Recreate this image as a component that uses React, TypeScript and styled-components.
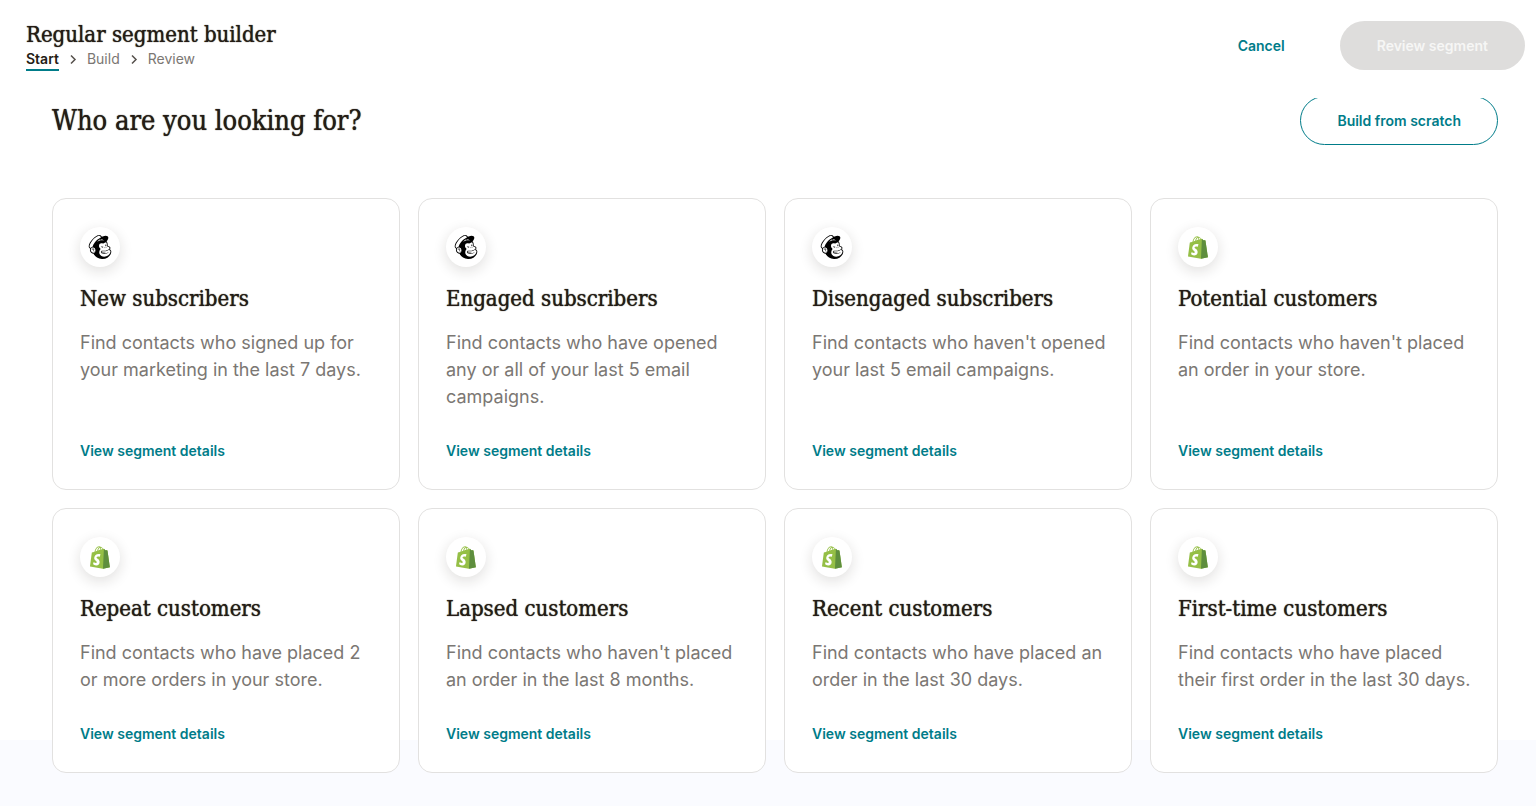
import React from "react";
import styled, { createGlobalStyle } from "styled-components";
import { SiMailchimp } from "react-icons/si";

const INK = "#241c15";
const MUTED = "#7b7773";
const TEAL = "#007c89";
const SERIF = '"DejaVu Serif Condensed", "DejaVu Serif", serif';

const GlobalStyle = createGlobalStyle`
  *, *::before, *::after { box-sizing: border-box; }
  body {
    margin: 0;
    background: #fafbff;
    color: ${INK};
    font-family: Inter, "Liberation Sans", sans-serif;
  }
  h1, h2, h3, p, ol { margin: 0; padding: 0; }
  h1, h2, h3 { text-shadow: 0 0 1px ${INK}; }
`;

const Page = styled.div`
  min-height: 100vh;
  background: linear-gradient(#fff, #fff) no-repeat top / 100% calc(100vh - 66px);
`;

const Header = styled.header`
  position: relative;
  z-index: 1;
  display: flex;
  align-items: flex-start;
  justify-content: space-between;
  height: 98px;
  padding: 21px 11px 0 26px;
  background: #fff;
`;

const PageTitle = styled.h1`
  font: 400 22px/28px ${SERIF};
`;

const Steps = styled.ol`
  display: flex;
  gap: 10px;
  list-style: none;
`;

const Step = styled.li<{ $current?: boolean }>`
  display: flex;
  gap: 10px;
  height: 22px;
  font-size: 14px;
  line-height: 20px;
  font-weight: ${(p) => (p.$current ? 600 : 400)};
  color: ${(p) => (p.$current ? INK : MUTED)};

  svg { margin-top: 5px; }
`;

const StepLabel = styled.span<{ $current?: boolean }>`
  border-bottom: 2px solid ${(p) => (p.$current ? TEAL : "transparent")};
`;

const Actions = styled.div`
  display: flex;
  gap: 18px;
`;

const Button = styled.button<{ $kind: "plain" | "primary" | "outline" }>`
  height: 49px;
  padding: 0 36px;
  border: 1px solid ${(p) => (p.$kind === "outline" ? TEAL : "transparent")};
  border-radius: 25px;
  background: ${(p) => (p.$kind === "primary" ? "#dedddc" : "transparent")};
  color: ${(p) => (p.$kind === "primary" ? "#f6f6f5" : TEAL)};
  font: 600 14px/20px Inter, "Liberation Sans", sans-serif;
  cursor: ${(p) => (p.$kind === "primary" ? "default" : "pointer")};
`;

const Main = styled.main`
  margin-top: -2px;
  padding: 0 38px 32px 52px;
`;

const Intro = styled.div`
  display: flex;
  align-items: center;
  justify-content: space-between;
  margin-bottom: 53px;
`;

const Question = styled.h2`
  font: 400 27px/36px ${SERIF};
`;

const Grid = styled.div`
  display: grid;
  grid-template-columns: repeat(4, 1fr);
  gap: 18px;
`;

const Card = styled.article`
  display: flex;
  flex-direction: column;
  align-items: flex-start;
  padding: 28px 20px 28px 27px;
  border: 1px solid #e2e1e0;
  border-radius: 14px;
  background: #fff;
`;

const Badge = styled.div`
  display: flex;
  align-items: center;
  justify-content: center;
  width: 40px;
  height: 40px;
  margin-bottom: 18px;
  border-radius: 50%;
  background: #fff;
  color: #000;
  box-shadow: 0 4px 14px rgba(36, 28, 21, 0.14);
`;

const CardTitle = styled.h3`
  font: 400 22px/28px ${SERIF};
`;

const CardText = styled.p`
  margin: 16px 0 31px;
  color: ${MUTED};
  font-size: 18px;
  line-height: 27px;
`;

const DetailsLink = styled.a`
  margin-top: auto;
  color: ${TEAL};
  font-size: 14px;
  font-weight: 600;
  line-height: 20px;
  text-decoration: none;
`;

const Chevron = () => (
  <svg width="8" height="11" viewBox="0 0 8 11" aria-hidden="true">
    <path d="M2 1.5 6 5.5 2 9.5" fill="none" stroke="#55504b" strokeWidth="1.5" />
  </svg>
);

const ShopifyLogo = () => (
  <svg width="20" height="23" viewBox="0 0 256 292" role="img" aria-label="Shopify">
    <path
      fill="#95BF46"
      d="M223.774 57.34c-.201-1.46-1.48-2.268-2.537-2.357-1.055-.088-23.383-1.743-23.383-1.743s-15.507-15.395-17.209-17.099c-1.703-1.703-5.029-1.185-6.32-.805-.19.056-3.388 1.043-8.678 2.68-5.18-14.906-14.322-28.604-30.405-28.604-.444 0-.901.018-1.358.044C129.31 3.407 123.644.779 118.75.779c-37.465 0-55.364 46.835-60.976 70.635-14.558 4.511-24.9 7.718-26.221 8.133-8.126 2.549-8.383 2.805-9.45 10.462C21.3 95.806.038 260.235.038 260.235l165.678 31.042 89.77-19.42S223.973 58.8 223.775 57.34zM156.49 40.848l-14.019 4.339c.005-.988.01-1.96.01-3.023 0-9.264-1.286-16.723-3.349-22.636 8.287 1.04 13.806 10.469 17.358 21.32zm-27.638-19.483c2.304 5.773 3.802 14.058 3.802 25.238 0 .572-.005 1.095-.01 1.624-9.117 2.824-19.024 5.89-28.953 8.966 5.575-21.516 16.025-31.908 25.161-35.828zm-11.131-10.537c1.617 0 3.246.549 4.805 1.622-12.007 5.65-24.877 19.88-30.312 48.297l-22.886 7.088C75.694 46.16 90.81 10.828 117.72 10.828z"
    />
    <path
      fill="#5E8E3E"
      d="M221.237 54.983c-1.055-.088-23.383-1.743-23.383-1.743s-15.507-15.395-17.209-17.099c-.637-.634-1.496-.959-2.394-1.099l-12.527 256.233 89.762-19.418S223.972 58.8 223.774 57.34c-.201-1.46-1.48-2.268-2.537-2.357"
    />
    <path
      fill="#fff"
      d="M135.242 104.585l-11.069 32.926s-9.698-5.176-21.586-5.176c-17.428 0-18.305 10.937-18.305 13.693 0 15.038 39.2 20.8 39.2 56.024 0 27.713-17.577 45.558-41.277 45.558-28.44 0-42.984-17.7-42.984-17.7l7.615-25.16s14.95 12.835 27.565 12.835c8.243 0 11.596-6.49 11.596-11.232 0-19.616-32.16-20.491-32.16-52.724 0-27.129 19.472-53.382 58.778-53.382 15.145 0 22.627 4.338 22.627 4.338"
    />
  </svg>
);

type Segment = { title: string; text: string; source: "mailchimp" | "shopify" };

const segments: Segment[] = [
  { source: "mailchimp", title: "New subscribers", text: "Find contacts who signed up for your marketing in the last 7 days." },
  { source: "mailchimp", title: "Engaged subscribers", text: "Find contacts who have opened any or all of your last 5 email campaigns." },
  { source: "mailchimp", title: "Disengaged subscribers", text: "Find contacts who haven't opened your last 5 email campaigns." },
  { source: "shopify", title: "Potential customers", text: "Find contacts who haven't placed an order in your store." },
  { source: "shopify", title: "Repeat customers", text: "Find contacts who have placed 2 or more orders in your store." },
  { source: "shopify", title: "Lapsed customers", text: "Find contacts who haven't placed an order in the last 8 months." },
  { source: "shopify", title: "Recent customers", text: "Find contacts who have placed an order in the last 30 days." },
  { source: "shopify", title: "First-time customers", text: "Find contacts who have placed their first order in the last 30 days." },
];

export default function App() {
  return (
    <>
      <GlobalStyle />
      <Page>
        <Header>
          <div>
            <PageTitle>Regular segment builder</PageTitle>
            <Steps>
              <Step $current aria-current="step">
                <StepLabel $current>Start</StepLabel>
              </Step>
              <Step>
                <Chevron />
                <StepLabel>Build</StepLabel>
              </Step>
              <Step>
                <Chevron />
                <StepLabel>Review</StepLabel>
              </Step>
            </Steps>
          </div>
          <Actions>
            <Button type="button" $kind="plain">Cancel</Button>
            <Button type="button" $kind="primary" disabled>Review segment</Button>
          </Actions>
        </Header>
        <Main>
          <Intro>
            <Question>Who are you looking for?</Question>
            <Button type="button" $kind="outline">Build from scratch</Button>
          </Intro>
          <Grid>
            {segments.map((s) => (
              <Card key={s.title}>
                <Badge>
                  {s.source === "mailchimp" ? <SiMailchimp size={24} title="Mailchimp" /> : <ShopifyLogo />}
                </Badge>
                <CardTitle>{s.title}</CardTitle>
                <CardText>{s.text}</CardText>
                <DetailsLink href="#">View segment details</DetailsLink>
              </Card>
            ))}
          </Grid>
        </Main>
      </Page>
    </>
  );
}
